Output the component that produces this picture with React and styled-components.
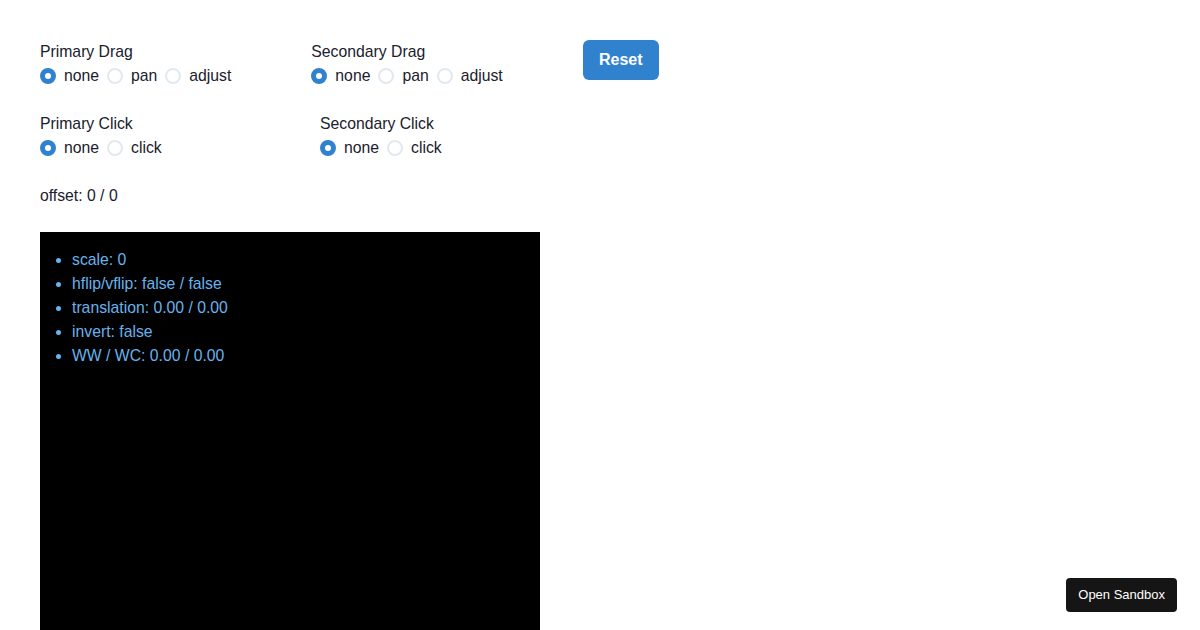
import React, { useState } from "react";
import styled, { createGlobalStyle } from "styled-components";

const Global = createGlobalStyle`
  html, body { margin: 0; padding: 0; background: #fff; }
  body {
    font-family: "Liberation Sans", Arial, sans-serif;
    font-size: 15.75px;
    line-height: 24px;
    color: #1a202c;
  }
`;

const Page = styled.div`
  padding: 40px;
  display: flex;
  flex-direction: column;
  gap: 24px;
  align-items: flex-start;
`;

const Row = styled.div`
  display: flex;
  align-items: flex-start;
  gap: 80px;
`;

const Group = styled.div`
  display: flex;
  flex-direction: column;
  min-width: ${(p) => p.$minWidth || 0}px;
`;

const Label = styled.div`
  line-height: 24px;
`;

const Options = styled.div`
  display: flex;
  align-items: center;
  gap: 8px;
`;

const Option = styled.label`
  display: inline-flex;
  align-items: center;
  gap: 8px;
  cursor: pointer;
  line-height: 24px;
`;

const Circle = styled.span`
  box-sizing: border-box;
  width: 16px;
  height: 16px;
  border-radius: 50%;
  background: #fff;
  border: ${(p) => (p.$checked ? "5px solid #3182ce" : "2px solid #e2e8f0")};
  flex: none;
`;

const ResetButton = styled.button`
  height: 40px;
  width: 76px;
  padding: 0;
  border: none;
  border-radius: 6px;
  background: #3182ce;
  color: #fff;
  font-family: "Liberation Sans", Arial, sans-serif;
  font-weight: 700;
  font-size: 16px;
  cursor: pointer;
`;

const Offset = styled.div`
  line-height: 24px;
`;

const Viewport = styled.div`
  width: 500px;
  height: 500px;
  background: #000;
`;

const InfoList = styled.ul`
  margin: 16px 0 0;
  padding-left: 32px;
  color: #66b3ee;
  li { line-height: 24px; }
`;

const SandboxButton = styled.div`
  position: fixed;
  right: 23px;
  bottom: 18px;
  background: #151515;
  color: #fff;
  font-size: 13px;
  line-height: 34px;
  height: 34px;
  padding: 0 12px;
  border-radius: 4px;
  font-family: "Liberation Sans", Arial, sans-serif;
`;

function RadioGroup({ label, options, minWidth }) {
  const [value, setValue] = useState(options[0]);
  return (
    <Group $minWidth={minWidth}>
      <Label>{label}</Label>
      <Options>
        {options.map((o) => (
          <Option key={o} onClick={() => setValue(o)}>
            <Circle $checked={value === o} />
            {o}
          </Option>
        ))}
      </Options>
    </Group>
  );
}

export default function App() {
  return (
    <>
      <Global />
      <Page>
        <Row>
          <RadioGroup label="Primary Drag" options={["none", "pan", "adjust"]} />
          <RadioGroup label="Secondary Drag" options={["none", "pan", "adjust"]} />
          <ResetButton>Reset</ResetButton>
        </Row>
        <Row>
          <RadioGroup label="Primary Click" options={["none", "click"]} minWidth={200} />
          <RadioGroup label="Secondary Click" options={["none", "click"]} />
        </Row>
        <Offset>offset: 0 / 0</Offset>
        <Viewport>
          <InfoList>
            <li>scale: 0</li>
            <li>hflip/vflip: false / false</li>
            <li>translation: 0.00 / 0.00</li>
            <li>invert: false</li>
            <li>WW / WC: 0.00 / 0.00</li>
          </InfoList>
        </Viewport>
      </Page>
      <SandboxButton>Open Sandbox</SandboxButton>
    </>
  );
}
